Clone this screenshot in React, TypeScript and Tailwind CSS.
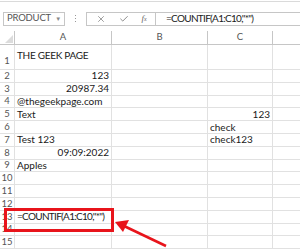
import { Check, X } from 'lucide-react'

const rows: { n: number; a?: string; aRight?: boolean; c?: string; cRight?: boolean }[] = [
  { n: 2, a: '123', aRight: true },
  { n: 3, a: '20987.34', aRight: true },
  { n: 4, a: '@thegeekpage.com' },
  { n: 5, a: 'Text', c: '123', cRight: true },
  { n: 6, c: 'check' },
  { n: 7, a: 'Test 123', c: 'check123' },
  { n: 8, a: '09:09:2022', aRight: true },
  { n: 9, a: 'Apples' },
  { n: 10 },
  { n: 11 },
  { n: 12 },
  { n: 13, a: '=COUNTIF(A1:C10,"*")' },
  { n: 14 },
  { n: 15 },
]

const cell = 'border-r border-b border-[#e1e1e1] flex items-center overflow-visible whitespace-nowrap'

export default function App() {
  return (
    <div className="relative w-[300px] h-[249px] overflow-hidden bg-white text-[#1a1a1a] font-['Lato',sans-serif] text-[10px]">
      {/* ribbon edge */}
      <div className="h-[2px] border-b border-[#dadada]" />

      {/* formula bar */}
      <div className="flex items-center h-[29px] pt-[4px]">
        <div className="ml-[3px] w-[62px] h-[14px] border border-[#c6c6c6] flex items-center justify-between px-[3px] text-[#555] text-[9.5px] tracking-[-0.2px]">
          <span>PRODUCT</span>
          <span className="text-[6px] text-[#888]">▼</span>
        </div>
        <div className="w-[21px] flex flex-col items-center gap-[2px]">
          <span className="w-[1px] h-[1px] bg-[#999]" />
          <span className="w-[1px] h-[1px] bg-[#999]" />
          <span className="w-[1px] h-[1px] bg-[#999]" />
        </div>
        <div className="flex-1 h-[14px] border border-r-0 border-[#c6c6c6] flex items-center">
          <div className="w-[68px] flex items-center justify-around text-[#666] pl-[3px] pr-[2px]">
            <X size={10} strokeWidth={1.5} />
            <Check size={10} strokeWidth={1.8} />
            <span className="font-['Liberation_Serif',serif] italic text-[9px]">f<span className="text-[6px]">x</span></span>
          </div>
          <div className="h-full border-l border-[#c6c6c6] flex items-center pl-[10px] tracking-[-0.7px]">=COUNTIF(A1:C10,"*")</div>
        </div>
      </div>

      {/* sheet */}
      <div className="grid grid-cols-[15px_97px_96px_65px_1fr]">
        <div className="h-[14px] border-r border-b border-[#c6c6c6] relative">
          <svg className="absolute left-[5px] top-[4px]" width="8" height="8" viewBox="0 0 8 8">
            <polygon points="8,0 8,8 0,8" fill="#dcdcdc" />
          </svg>
        </div>
        <div className="h-[14px] border-r border-b border-[#c6c6c6] flex items-center justify-center text-[#555] text-[9.5px]">A</div>
        <div className="h-[14px] border-r border-b border-[#c6c6c6] flex items-center justify-center text-[#555] text-[9.5px]">B</div>
        <div className="h-[14px] border-r border-b border-[#c6c6c6] flex items-center justify-center text-[#555] text-[9.5px]">C</div>
        <div className="h-[14px] border-b border-[#c6c6c6]" />

        <div className="h-[25px] border-r border-b border-[#e1e1e1] flex items-end justify-center pb-[1px] text-[#555] text-[9.5px]">1</div>
        <div className={`${cell} h-[25px] pl-[2px] pb-[3px] tracking-[-0.3px]`}>THE GEEK PAGE</div>
        <div className={`${cell} h-[25px]`} />
        <div className={`${cell} h-[25px]`} />
        <div className="h-[25px] border-b border-[#e1e1e1]" />

        {rows.map((r) => (
          <div key={r.n} className="contents">
            <div className="h-[12.8px] border-r border-b border-[#e1e1e1] flex items-center justify-center text-[#555] text-[9.5px]">{r.n}</div>
            <div className={`${cell} h-[12.8px] px-[2px] ${r.aRight ? 'justify-end' : ''} ${r.n === 13 ? 'tracking-[-0.7px]' : ''}`}>{r.a}</div>
            <div className={`${cell} h-[12.8px]`} />
            <div className={`${cell} h-[12.8px] px-[2px] ${r.cRight ? 'justify-end' : ''}`}>{r.c}</div>
            <div className="h-[12.8px] border-b border-[#e1e1e1]" />
          </div>
        ))}
      </div>

      {/* annotation */}
      <div className="absolute left-[4px] top-[208px] w-[110px] h-[24px] border-[3px] border-[#e8141b]" />
      <svg className="absolute left-0 top-0" width="300" height="249" viewBox="0 0 300 249">
        <line x1="166" y1="246" x2="124" y2="226" stroke="#e8141b" strokeWidth="2.5" />
        <polygon points="115,222 129,220 123,232" fill="#e8141b" />
      </svg>
    </div>
  )
}
